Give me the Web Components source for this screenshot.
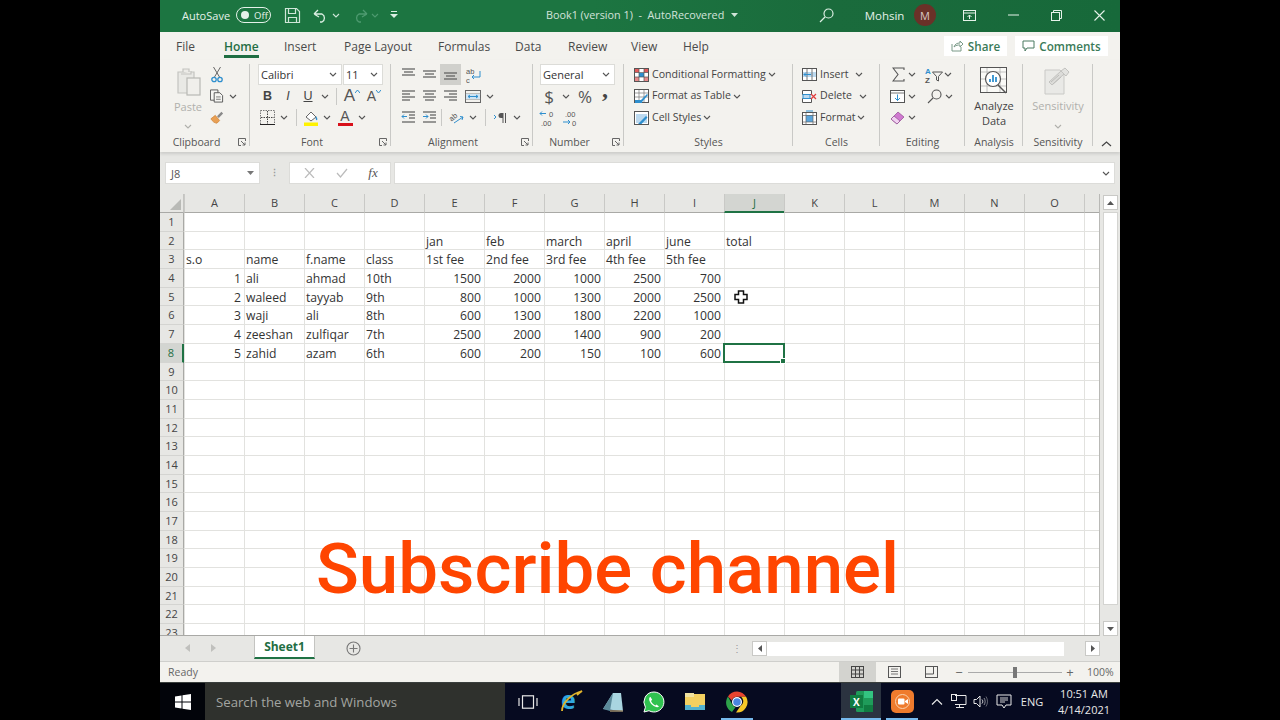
<!DOCTYPE html>
<html>
<head>
<meta charset="utf-8">
<title>Book1</title>
<style>
  html, body { margin: 0; padding: 0; background: #000; height: 720px; overflow: hidden; }
  body { font-family: "Open Sans", "Liberation Sans", sans-serif; }
</style>
</head>
<body>
<excel-window>
  <title-bar></title-bar>
  <ribbon-tabs></ribbon-tabs>
  <home-ribbon></home-ribbon>
  <formula-bar></formula-bar>
  <sheet-grid></sheet-grid>
  <sheet-tabs></sheet-tabs>
  <status-bar></status-bar>
  <task-bar></task-bar>
  <subscribe-banner>Subscribe channel</subscribe-banner>
</excel-window>

<script>
const G = "#5a5a5a", B = "#2f8fce";
const chev = (c = "#555") => `<svg width="8" height="5" viewBox="0 0 8 5"><path d="M1 1l3 3 3-3" fill="none" stroke="${c}" stroke-width="1.1"/></svg>`;
const lines = (rows) => rows.map(([x1, x2, y]) => `<path d="M${x1} ${y}H${x2}" stroke="${G}" stroke-width="1.2"/>`).join("");

// ribbon and window icons, all drawn by hand
const ICONS = {
  save: `<svg width="17" height="17" viewBox="0 0 17 17" fill="none" stroke="#cfe6d8" stroke-width="1.2"><path d="M1.5 1.5h11l3 3v11h-14z"/><path d="M4.5 1.5v5h7v-5M4.5 15.5v-5h8v5"/></svg>`,
  undo: `<svg width="16" height="16" viewBox="0 0 16 16" fill="none" stroke="#dcefe3" stroke-width="1.3"><path d="M1 7l4-4M1 7l5 3M1 7h8a4.5 4.5 0 0 1 0 8H7"/></svg>`,
  redo: `<svg width="16" height="16" viewBox="0 0 16 16" fill="none" stroke="#4e9a70" stroke-width="1.3"><path d="M15 7l-4-4M15 7l-5 3M15 7H7a4.5 4.5 0 0 0 0 8h2"/></svg>`,
  qat: `<svg width="8" height="8" viewBox="0 0 8 8" fill="#dcefe3"><rect x="1" y="0" width="6" height="1"/><path d="M0 3h8L4 7z"/></svg>`,
  search: `<svg width="15" height="15" viewBox="0 0 15 15" fill="none" stroke="#dcefe3" stroke-width="1.2"><circle cx="9.5" cy="5.5" r="4.5"/><path d="M6 9l-5 5"/></svg>`,
  display: `<svg width="13" height="11" viewBox="0 0 13 11" fill="none" stroke="#e6f2ea"><rect x=".5" y=".5" width="12" height="10"/><path d="M.5 3h12M6.5 9V5M4.5 7l2-2 2 2"/></svg>`,
  min: `<svg width="11" height="2" viewBox="0 0 11 2"><path d="M0 1h11" stroke="#e6f2ea"/></svg>`,
  restore: `<svg width="11" height="11" viewBox="0 0 11 11" fill="none" stroke="#e6f2ea"><rect x=".5" y="2.5" width="8" height="8"/><path d="M2.5 2.5v-2h8v8h-2"/></svg>`,
  close: `<svg width="11" height="11" viewBox="0 0 11 11" stroke="#e6f2ea" stroke-width="1.1"><path d="M.5.5l10 10M10.5.5l-10 10"/></svg>`,
  share: `<svg width="13" height="13" viewBox="0 0 13 13" fill="none" stroke="#7a9a88"><path d="M1 5v7h9V8M3 8c1-3 3-4 6-4V2l3 3-3 3V6c-2 0-4 0-6 2z"/></svg>`,
  comment: `<svg width="13" height="12" viewBox="0 0 13 12" fill="none" stroke="#4a7a60"><path d="M1 1h11v7H5l-2 3V8H1z"/></svg>`,
  paste: `<svg width="28" height="30" viewBox="0 0 28 30" fill="none" stroke="#c4c4c0" stroke-width="1.2"><path d="M4 5h16v21H4z" fill="#e9e9e5"/><path d="M9 5V2h6v3M7 7h10V4" fill="#ecebe7"/><rect x="13" y="11" width="13" height="17" fill="#f0efeb" stroke="#b8b8b4"/></svg>`,
  cut: `<svg width="12" height="16" viewBox="0 0 12 16" fill="none"><path d="M2.5 0l6 10M9.5 0l-6 10" stroke="#666"/><circle cx="3" cy="12.5" r="2.2" stroke="${B}" stroke-width="1.3"/><circle cx="9" cy="12.5" r="2.2" stroke="${B}" stroke-width="1.3"/></svg>`,
  copy: `<svg width="15" height="14" viewBox="0 0 15 14" fill="#f6f6f3" stroke="#555"><path d="M.5.5h8v11h-8z"/><path d="M4.5 3.5h6l3 3v7h-9z"/><path d="M6.5 8h5M6.5 10.5h5" stroke-width=".8"/></svg>`,
  brush: `<svg width="16" height="15" viewBox="0 0 16 15"><path d="M1 9l5-4 5 6-3 3c-3 0-5-2-7-5z" fill="#e9a054" stroke="#c97a2a" stroke-width=".7"/><path d="M8 6l5-5 2 2-5 5z" fill="#8a8a8a"/></svg>`,
  border: `<svg width="15" height="15" viewBox="0 0 15 15" fill="none" stroke="#777"><rect x=".5" y=".5" width="14" height="14" stroke-dasharray="1.5 1"/><path d="M7.5 1v13M1 7.5h13" stroke="#444" stroke-dasharray="1.5 1"/><path d="M0 14.5h15" stroke="#222"/></svg>`,
  fill: `<svg width="15" height="16" viewBox="0 0 15 16"><path d="M2 7l5-5 5 5-5 4z" fill="#fff" stroke="#666"/><path d="M12 6c1 2 2 3 1 4s-2-2-1-4z" fill="${B}"/><rect x="0" y="12.5" width="14" height="3.5" fill="#fff200"/></svg>`,
  alignT: `<svg width="15" height="13" viewBox="0 0 15 13" fill="none">${lines([[1,14,1],[3,12,4],[1,14,7]])}</svg>`,
  alignM: `<svg width="15" height="13" viewBox="0 0 15 13" fill="none">${lines([[1,14,3],[3,12,6],[1,14,9]])}</svg>`,
  alignB: `<svg width="15" height="13" viewBox="0 0 15 13" fill="none">${lines([[1,14,5],[3,12,8],[1,14,11]])}</svg>`,
  left: `<svg width="15" height="13" viewBox="0 0 15 13" fill="none">${lines([[1,14,1],[1,9,4],[1,14,7],[1,9,10]])}</svg>`,
  center: `<svg width="15" height="13" viewBox="0 0 15 13" fill="none">${lines([[1,14,1],[3,12,4],[1,14,7],[3,12,10]])}</svg>`,
  right: `<svg width="15" height="13" viewBox="0 0 15 13" fill="none">${lines([[1,14,1],[6,14,4],[1,14,7],[6,14,10]])}</svg>`,
  outdent: `<svg width="15" height="13" viewBox="0 0 15 13" fill="none">${lines([[1,14,1],[8,14,4],[8,14,7],[1,14,11]])}<path d="M6 5.5H1M3 3.5l-2 2 2 2" stroke="${B}"/></svg>`,
  indent: `<svg width="15" height="13" viewBox="0 0 15 13" fill="none">${lines([[1,14,1],[8,14,4],[8,14,7],[1,14,11]])}<path d="M1 5.5h5M4 3.5l2 2-2 2" stroke="${B}"/></svg>`,
  wrap: `<svg width="15" height="16" viewBox="0 0 15 16" style="overflow:visible"><text x="0" y="7" font-size="7.5" font-family="Liberation Sans" fill="#555">ab</text><text x="0" y="15.5" font-size="7.5" font-family="Liberation Sans" fill="#555">c</text><path d="M14 4v6H6M8 8l-2 2 2 2" fill="none" stroke="${B}"/></svg>`,
  merge: `<svg width="16" height="13" viewBox="0 0 16 13" fill="none"><rect x=".5" y=".5" width="15" height="12" stroke="#666"/><path d="M.5 4h15M.5 9h15" stroke="#888"/><rect x="1" y="4" width="14" height="5" fill="#cfe4f3"/><path d="M3 6.5h10M5 5L3 6.5 5 8M11 5l2 1.5L11 8" stroke="${B}"/></svg>`,
  orient: `<svg width="16" height="15" viewBox="0 0 16 15" fill="none" style="overflow:visible"><text x="0" y="9" font-size="7.5" font-family="Liberation Sans" fill="#555" transform="rotate(-40 5 7)">ab</text><path d="M5 13l9-6M11 6.500l3 .5-1 3" stroke="${B}"/></svg>`,
  para: `<svg width="13" height="11" viewBox="0 0 13 11" fill="none"><path d="M0 3l2 2-2 2" stroke="${B}"/><path d="M9 1v10M11.500 1v10" stroke="#555"/><path d="M9 1H7a2 2 0 0 0 0 5h2z" fill="#555"/></svg>`,
  incDec: `<svg width="17" height="16" viewBox="0 0 17 16" style="overflow:visible"><path d="M7 3.500H1M3 1.500l-2 2 2 2" fill="none" stroke="${B}"/><text x="10" y="7" font-size="7.500" font-family="Liberation Sans" fill="#555">0</text><text x="2" y="15.500" font-size="7.500" font-family="Liberation Sans" fill="#555">.00</text></svg>`,
  decDec: `<svg width="17" height="16" viewBox="0 0 17 16" style="overflow:visible"><text x="3" y="6.500" font-size="7.500" font-family="Liberation Sans" fill="#555">.00</text><path d="M1 12h7M6 10l2 2-2 2" fill="none" stroke="${B}"/><text x="10" y="15.500" font-size="7.500" font-family="Liberation Sans" fill="#555">0</text></svg>`,
  cond: `<svg width="15" height="14" viewBox="0 0 15 14"><rect x=".5" y=".5" width="14" height="13" fill="#fff" stroke="#555"/><rect x="1" y="1" width="4" height="3.500" fill="#e05a5a"/><rect x="5" y="5" width="5" height="4" fill="#2f8fce"/><rect x="10" y="1" width="4" height="3.500" fill="#e05a5a"/><rect x="1" y="9" width="4" height="4" fill="#e98a8a"/><rect x="10" y="9" width="4" height="4" fill="#e98a8a"/><path d="M5 1v12M10 1v12M1 4.500h13M1 9h13" stroke="#555" stroke-width=".7"/></svg>`,
  table: `<svg width="15" height="14" viewBox="0 0 15 14" fill="none"><rect x=".5" y=".5" width="14" height="13" fill="#fff" stroke="#555"/><path d="M1 4h13M5 1v12M10 1v12M1 8h13" stroke="#777" stroke-width=".7"/><path d="M5 13l8-8 1 1-6 7z" fill="${B}"/><rect x="1" y="11" width="7" height="3" fill="${B}"/></svg>`,
  cellst: `<svg width="15" height="14" viewBox="0 0 15 14" fill="none"><rect x=".5" y=".5" width="14" height="13" fill="#fff" stroke="#555"/><rect x="2" y="3" width="11" height="9" fill="#bcd9ef"/><path d="M4 13l8-8 1.500 1.500-6 6.500z" fill="${B}"/></svg>`,
  insert: `<svg width="15" height="13" viewBox="0 0 15 13" fill="none"><rect x=".5" y=".5" width="14" height="12" fill="#fff" stroke="#555"/><rect x="1" y="4" width="13" height="5" fill="#bcd9ef"/><path d="M5 1v11M10 1v11" stroke="#777"/><path d="M9 6.500H2M4 4.500l-2 2 2 2" stroke="${B}"/></svg>`,
  del: `<svg width="15" height="13" viewBox="0 0 15 13" fill="none"><path d="M.5.5h9v4h-9zM.5 8.500h9v4h-9z" fill="#fff" stroke="#555"/><rect x="1" y="4.500" width="7" height="4" fill="#bcd9ef" stroke="#2f8fce"/><path d="M9 4l5 5M14 4l-5 5" stroke="#e03c3c" stroke-width="1.200"/></svg>`,
  format: `<svg width="15" height="15" viewBox="0 0 15 15" fill="none"><rect x=".5" y="2.500" width="14" height="12" fill="#fff" stroke="#555"/><rect x="4" y="5" width="7" height="7" fill="#5aa5dc"/><path d="M4 3v11M11 3v11M1 5.500h13M1 12h13" stroke="#666" stroke-width=".7"/><path d="M4 1h7" stroke="${B}"/></svg>`,
  sum: `<svg width="13" height="15" viewBox="0 0 13 15" fill="none"><path d="M12 3V1H1l5 6.500L1 14h11v-2" stroke="#555" stroke-width="1.100"/></svg>`,
  sort: `<svg width="18" height="16" viewBox="0 0 18 16" style="overflow:visible"><text x="0" y="7" font-size="8" font-weight="700" font-family="Liberation Sans" fill="${B}">A</text><text x="0" y="16" font-size="8" font-weight="700" font-family="Liberation Sans" fill="#555">Z</text><path d="M7.500 5h10l-4 4.500V14l-2-1V9.500z" fill="none" stroke="#555"/></svg>`,
  filldown: `<svg width="15" height="13" viewBox="0 0 15 13" fill="none"><rect x=".5" y=".5" width="14" height="12" fill="#fff" stroke="#555"/><path d="M1 3h13" stroke="#777"/><path d="M7.500 4.500v6M5 8l2.500 2.500L10 8" stroke="${B}"/></svg>`,
  find: `<svg width="15" height="15" viewBox="0 0 15 15" fill="none" stroke="#555" stroke-width="1.100"><circle cx="9.500" cy="5.500" r="4.500"/><path d="M6 9l-5 5"/></svg>`,
  eraser: `<svg width="15" height="14" viewBox="0 0 15 14"><path d="M1 8l7-7 6 5-7 7z" fill="#d07ad0" stroke="#904a90" stroke-width=".7"/><path d="M1 8l3-3 6 5-3 3z" fill="#f1d3f1" stroke="#904a90" stroke-width=".7"/></svg>`,
  analyze: `<svg width="28" height="28" viewBox="0 0 28 28" fill="none"><rect x=".5" y=".5" width="26" height="25" stroke="#555" fill="#fafaf7"/><path d="M1 5h25M1 12h25M1 19h25M7 1v24M20 1v24" stroke="#aaa" stroke-width=".7"/><circle cx="13" cy="12" r="7.500" fill="#fff" stroke="#555" stroke-width="1.200"/><path d="M18 18l8 8" stroke="#555" stroke-width="1.500"/><path d="M10 15v-3M13 15V8M16 15v-5" stroke="${B}" stroke-width="1.800"/></svg>`,
  sensitivity: `<svg width="28" height="28" viewBox="0 0 28 28" fill="none"><path d="M1 3h15l4 4v20H1z" fill="#e9e9e6" stroke="#c9c9c6"/><path d="M5 15l12-11 3 3L8 18z" fill="#dcdcd9" stroke="#c2c2bf"/><path d="M17 4l4-3 4 4-3 4z" fill="#e3e3e0" stroke="#c2c2bf"/><path d="M7 15l8-7M9 17l8-7" stroke="#bdbdba"/></svg>`,
  launcher: `<svg width="8" height="8" viewBox="0 0 8 8" fill="none" stroke="#666"><path d="M7.500 3V.5H.5v7H3"/><path d="M3 3l4 4M7 4.500V7H4.500"/></svg>`,
  up: `<svg width="11" height="6" viewBox="0 0 11 6" fill="none"><path d="M1 5l4.500-4L10 5" stroke="#444" stroke-width="1.200"/></svg>`,
  normal: `<svg width="13" height="12" viewBox="0 0 13 12" fill="none" stroke="#444"><rect x=".5" y=".5" width="12" height="11"/><path d="M4.500 0v12M8.500 0v12M0 4h13M0 8h13"/></svg>`,
  layout: `<svg width="13" height="12" viewBox="0 0 13 12" fill="none" stroke="#555"><rect x=".5" y=".5" width="12" height="11"/><path d="M3 3h7M3 5.500h7M3 8h7" stroke-width=".8"/></svg>`,
  pbreak: `<svg width="13" height="12" viewBox="0 0 13 12" fill="none" stroke="#555"><rect x=".5" y=".5" width="12" height="11"/><path d="M8.500 0v8H0"/></svg>`,
};

// puts an icon (or any markup) into a fixed width slot in a ribbon row
const cell = (w, inner = "", extra = "") => `<span class="c" style="width:${w}px;${extra}">${inner}</span>`;
const i = (name, w) => cell(w, ICONS[name]);
const c = (w) => cell(w, chev());

class ExcelWindow extends HTMLElement {
  constructor() {
    super();
    this.attachShadow({ mode: "open" }).innerHTML = `
      <style>
        :host { display: flex; flex-direction: column; position: relative; width: 960px; height: 720px; margin: 0 auto; overflow: hidden; font-family: "Open Sans", "Liberation Sans", sans-serif; background: #f3f2ee; }
      </style>
      <slot></slot>`;
  }
}

class TitleBar extends HTMLElement {
  constructor() {
    super();
    this.attachShadow({ mode: "open" }).innerHTML = `
      <style>
        :host { display: flex; align-items: center; height: 32px; flex: none; color: #e4f1e9; font-size: 11px; background: linear-gradient(90deg, #1c7541 0%, #1c7541 45%, #1a6b3c 70%, #17693a 100%); }
        .c { display: flex; justify-content: center; align-items: center; flex: none; height: 32px; margin-top: -2px; }
        .toggle { box-sizing: border-box; width: 35px; height: 16px; border: 1px solid #e4f1e9; border-radius: 8px; display: flex; align-items: center; gap: 5px; padding-left: 4px; font-size: 9.5px; margin-right: 10px; margin-top: -2px; flex: none; }
        .toggle b { width: 8px; height: 8px; background: #e4f1e9; border-radius: 50%; flex: none; }
        .title { flex: none; display: flex; align-items: center; font-size: 10.800px; opacity: .9; white-space: nowrap; margin-left: 143px; margin-top: -3px; width: 268px; }
        .title svg { margin-left: 7px; }
        .avatar { width: 22px; height: 22px; border-radius: 50%; background: #6a3128; color: #d8c7c2; display: flex; align-items: center; justify-content: center; font-size: 11px; flex: none; margin-top: -2px; }
      </style>
      ${cell(54, "AutoSave", "justify-content:flex-start;padding-left:22px;font-size:11px")}
      <span class="toggle"><b></b>Off</span>
      ${i("save", 22)}${cell(8)}${i("undo", 20)}${cell(10, chev("#cfe6d8"))}${cell(9)}${i("redo", 20)}${cell(10, chev("#4e9a70"))}${cell(5)}${i("qat", 18)}
      <span class="title">Book1 (version 1)&nbsp; -&nbsp; AutoRecovered <svg width="7" height="4" viewBox="0 0 7 4" fill="#e4f1e9"><path d="M0 0h7L3.500 4z"/></svg></span>
      ${i("search", 24)}${cell(28)}
      ${cell(37, "Mohsin", "font-size:11.5px")}${cell(11)}<span class="avatar">M</span>
      ${cell(21)}${i("display", 24)}${cell(20)}${i("min", 24)}${cell(19)}${i("restore", 24)}${cell(19)}${i("close", 24)}`;
  }
}

class RibbonTabs extends HTMLElement {
  constructor() {
    super();
    const tabs = [["File", 48], ["Home", 60], ["Insert", 60], ["Page Layout", 94], ["Formulas", 77], ["Data", 53], ["Review", 63], ["View", 52], ["Help", 261]];
    this.attachShadow({ mode: "open" }).innerHTML = `
      <style>
        :host { display: flex; align-items: stretch; height: 28px; flex: none; padding-left: 16px; font-size: 12px; color: #4a4a4a; background: #f3f2ee; }
        .t { flex: none; line-height: 29px; white-space: nowrap; }
        .on { color: #1f6e43; font-weight: 600; }
        .on span { display: inline-block; height: 26px; box-sizing: border-box; border-bottom: 3px solid #1f6e43; }
        .btn { flex: none; align-self: center; height: 20px; margin-top: -1px; background: #fff; color: #3a7a58; font-weight: 600; font-size: 11.700px; display: flex; align-items: center; justify-content: center; gap: 4px; box-sizing: border-box; }
      </style>
      ${tabs.map(([t, w]) => `<div class="t ${t === "Home" ? "on" : ""}" style="width:${w}px"><span>${t}</span></div>`).join("")}
      <div class="btn" style="width:63px">${ICONS.share}Share</div>
      <div style="width:8px"></div>
      <div class="btn" style="width:93px">${ICONS.comment}Comments</div>`;
  }
}

class RibbonGroup extends HTMLElement {
  constructor() {
    super();
    const launch = this.hasAttribute("launcher") ? `<span class="launch">${ICONS.launcher}</span>` : "";
    this.attachShadow({ mode: "open" }).innerHTML = `
      <style>
        :host { display: flex; flex-direction: column; flex: none; box-sizing: border-box; height: 92px; position: relative; }
        .body { height: 70px; padding-top: 4px; box-sizing: border-box; flex: none; }
        .label { height: 20px; display: flex; align-items: center; justify-content: center; font-size: 10.5px; color: #555; margin-top: 2px; padding-right: var(--label-shift, 0); white-space: nowrap; }
        .sep { position: absolute; right: 0; top: 4px; bottom: 6px; width: 1px; background: #c9c9c6; }
        .launch { position: absolute; right: 4px; bottom: 6px; display: flex; }
      </style>
      <div class="body"><slot></slot></div>
      <div class="label">${this.getAttribute("label")}</div>
      ${launch}
      <span class="sep"></span>`;
  }
}

class HomeRibbon extends HTMLElement {
  constructor() {
    super();
    this.attachShadow({ mode: "open" }).innerHTML = `
      <style>
        :host { display: flex; height: 92px; flex: none; background: #f3f2ee; color: #444; font-size: 11px; box-shadow: 0 2px 3px rgba(0,0,0,.12); position: relative; z-index: 1; }
        .r { display: flex; align-items: center; height: 21.500px; }
        .c { display: flex; align-items: center; justify-content: center; flex: none; height: 21px; }
        .split { display: flex; }
        .col { display: flex; flex-direction: column; align-items: center; }
        .select { box-sizing: border-box; height: 21px; background: #fff; border: 1px solid #dcdcd8; display: flex; align-items: center; justify-content: space-between; padding: 0 4px 0 2px; font-size: 11px; flex: none; color: #333; }
        .vsep { width: 1px; height: 17px; background: #c9c9c6; flex: none; }
        .big { font-size: 11px; line-height: 15px; text-align: center; }
        .muted { color: #b0b0ac; }
        .lab { font-size: 10.600px; color: #444; white-space: nowrap; margin-top: -2px; }
        b, u, em { font-family: "Liberation Sans", sans-serif; font-size: 12.500px; color: #444; }
        .A { font-family: "Liberation Sans", sans-serif; font-size: 15px; color: #555; }
      </style>

      <rb-group label="Clipboard" launcher style="width:90px;--label-shift:17px">
        <div class="split">
          <div class="col" style="width:36px;margin-left:10px;margin-right:4px;padding-top:3px;flex:none">
            ${ICONS.paste}
            <span class="big muted" style="margin-top:2px">Paste</span>
            <span style="margin-top:3px">${chev("#b0b0ac")}</span>
          </div>
          <div>
            <div class="r">${i("cut", 14)}</div>
            <div class="r">${i("copy", 14)}${cell(5)}${c(8)}</div>
            <div class="r">${i("brush", 14)}</div>
          </div>
        </div>
      </rb-group>

      <rb-group label="Font" launcher style="width:141px;--label-shift:17px">
        <div class="r" style="padding-left:8px;gap:1px">
          <span class="select" style="width:84px">Calibri ${chev()}</span>
          <span class="select" style="width:40px">11 ${chev()}</span>
        </div>
        <div class="r" style="padding-left:7px">
          ${cell(21, "<b>B</b>")}${cell(20, "<em>I</em>")}${cell(20, "<u>U</u>")}${c(14)}${cell(9, '<span class="vsep"></span>')}
          ${cell(22, '<span class="A" style="font-size:17px">A</span><svg width="5" height="4" viewBox="0 0 5 4" style="margin-bottom:9px"><path d="M0 3l2.500-3L5 3" fill="none" stroke="#2f8fce"/></svg>')}
          ${cell(22, '<span class="A" style="font-size:14px">A</span><svg width="5" height="4" viewBox="0 0 5 4" style="margin-bottom:9px"><path d="M0 0l2.500 3L5 0" fill="none" stroke="#2f8fce"/></svg>')}
        </div>
        <div class="r" style="padding-left:7px">
          ${i("border", 20)}${c(14)}${cell(3)}${cell(4, '<span class="vsep"></span>')}${cell(3)}${i("fill", 20)}${c(12)}${cell(1)}
          ${cell(22, '<span style="display:flex;flex-direction:column;align-items:center"><span class="A" style="line-height:13px;font-size:14px">A</span><span style="width:15px;height:3px;background:#d8101a"></span></span>')}${c(12)}
        </div>
      </rb-group>

      <rb-group label="Alignment" launcher style="width:142px;--label-shift:18px">
        <div class="r" style="padding-left:7px">${i("alignT", 21)}${i("alignM", 21)}${cell(21, ICONS.alignB, "background:#d0d0cc")}${i("wrap", 24)}</div>
        <div class="r" style="padding-left:7px">${i("left", 21)}${i("center", 21)}${i("right", 21)}${i("merge", 24)}${c(10)}</div>
        <div class="r" style="padding-left:7px">${i("outdent", 21)}${i("indent", 21)}${cell(3, '<span class="vsep"></span>')}${cell(2)}${i("orient", 24)}${c(8)}${cell(8)}${cell(1, '<span class="vsep"></span>')}${cell(4)}${i("para", 21)}${c(12)}</div>
      </rb-group>

      <rb-group label="Number" launcher style="width:91px;--label-shift:18px">
        <div class="r" style="padding-left:7px"><span class="select" style="width:75px">General ${chev()}</span></div>
        <div class="r" style="padding-left:6px">${cell(20, '<span style="font-size:17px;color:#555">$</span>')}${c(14)}${cell(24, '<span style="font-size:17px;color:#555">%</span>')}${cell(16, '<span style="font-size:24px;font-weight:700;color:#444;line-height:14px;margin-bottom:14px;font-family:Liberation Serif,serif">,</span>')}</div>
        <div class="r" style="padding-left:3px">${i("incDec", 23)}${i("decDec", 23)}</div>
      </rb-group>

      <rb-group label="Styles" style="width:169px">
        <div class="r" style="padding-left:9px">${i("cond", 17)}${cell(2)}<span class="lab">Conditional Formatting</span>${cell(12, chev())}</div>
        <div class="r" style="padding-left:9px">${i("table", 17)}${cell(2)}<span class="lab">Format as Table</span>${cell(12, chev())}</div>
        <div class="r" style="padding-left:9px">${i("cellst", 17)}${cell(2)}<span class="lab">Cell Styles</span>${cell(12, chev())}</div>
      </rb-group>

      <rb-group label="Cells" style="width:87px">
        <div class="r" style="padding-left:8px">${i("insert", 17)}${cell(2)}<span class="lab" style="width:34px">Insert</span>${c(10)}</div>
        <div class="r" style="padding-left:8px">${i("del", 17)}${cell(2)}<span class="lab" style="width:38px">Delete</span>${c(10)}</div>
        <div class="r" style="padding-left:8px">${i("format", 17)}${cell(2)}<span class="lab">Format</span>${cell(11, chev())}</div>
      </rb-group>

      <rb-group label="Editing" style="width:85px">
        <div class="r" style="padding-left:10px">${i("sum", 16)}${c(12)}${cell(6)}${i("sort", 19)}${c(9)}</div>
        <div class="r" style="padding-left:9px">${i("filldown", 17)}${c(11)}${cell(7)}${i("find", 20)}${c(9)}</div>
        <div class="r" style="padding-left:9px">${i("eraser", 17)}${c(11)}</div>
      </rb-group>

      <rb-group label="Analysis" style="width:58px">
        <div class="col" style="padding-top:3px">
          ${ICONS.analyze}
          <span class="big" style="margin-top:3px">Analyze<br>Data</span>
        </div>
      </rb-group>

      <rb-group label="Sensitivity" style="width:70px">
        <div class="col" style="padding-top:3px">
          ${ICONS.sensitivity}
          <span class="big muted" style="margin-top:3px">Sensitivity</span>
          <span style="margin-top:4px">${chev("#b0b0ac")}</span>
        </div>
      </rb-group>

      <div style="flex:1;display:flex;justify-content:center;align-items:flex-end;padding-bottom:5px">${ICONS.up}</div>`;
  }
}

class FormulaBar extends HTMLElement {
  constructor() {
    super();
    this.attachShadow({ mode: "open" }).innerHTML = `
      <style>
        :host { display: flex; align-items: center; height: 42px; flex: none; background: #e7e7e4; padding: 0 5px; box-sizing: border-box; font-size: 11px; color: #555; }
        .box { height: 22px; background: #fff; border: 1px solid #dcdcd9; box-sizing: border-box; display: flex; align-items: center; flex: none; }
        .name { width: 95px; justify-content: space-between; padding: 0 5px; }
        .dots { width: 29px; display: flex; justify-content: center; color: #999; font-weight: 700; font-size: 9px; line-height: 4px; }
        .fx { width: 102px; justify-content: space-around; padding: 0 2px 0 4px; color: #bbb; }
        .fx i { font-family: "Liberation Serif", serif; color: #555; font-size: 13px; }
        .input { width: 721px; margin-left: 3px; justify-content: flex-end; padding-right: 4px; }
      </style>
      <div class="box name">J8 <svg width="7" height="4" viewBox="0 0 7 4" fill="#777"><path d="M0 0h7L3.500 4z"/></svg></div>
      <div class="dots">⋮</div>
      <div class="box fx">
        <svg width="11" height="10" viewBox="0 0 11 10" stroke="#bbb" stroke-width="1.200"><path d="M1 0l9 10M10 0L1 10"/></svg>
        <svg width="12" height="10" viewBox="0 0 12 10" fill="none" stroke="#bbb" stroke-width="1.200"><path d="M1 5l3.500 4L11 1"/></svg>
        <i>fx</i>
      </div>
      <div class="box input">${chev("#555")}</div>`;
  }
}

class SheetGrid extends HTMLElement {
  constructor() {
    super();
    const cols = "ABCDEFGHIJKLMNO".split("");
    // row number -> cell values for columns A..J
    const data = {
      2: ["", "", "", "", "jan", "feb", "march", "april", "june", "total"],
      3: ["s.o", "name", "f.name", "class", "1st fee", "2nd fee", "3rd fee", "4th fee", "5th fee"],
      4: [1, "ali", "ahmad", "10th", 1500, 2000, 1000, 2500, 700],
      5: [2, "waleed", "tayyab", "9th", 800, 1000, 1300, 2000, 2500],
      6: [3, "waji", "ali", "8th", 600, 1300, 1800, 2200, 1000],
      7: [4, "zeeshan", "zulfiqar", "7th", 2500, 2000, 1400, 900, 200],
      8: [5, "zahid", "azam", "6th", 600, 200, 150, 100, 600],
    };
    let html = `<div class="corner"><svg width="11" height="11" viewBox="0 0 11 11"><path d="M11 0v11H0z" fill="#b9bab6"/></svg></div>`;
    html += cols.map((l) => `<div class="ch ${l === "J" ? "sel" : ""}">${l}</div>`).join("");
    html += `<div class="ch end"></div>`;
    for (let r = 1; r <= 23; r++) {
      html += `<div class="rh ${r === 8 ? "sel" : ""}">${r}</div>`;
      for (let k = 0; k < 15; k++) {
        const v = (data[r] || [])[k];
        const cls = typeof v === "number" ? "d num" : "d";
        html += `<div class="${cls}">${v === undefined ? "" : v}</div>`;
      }
      html += `<div class="d"></div>`;
    }
    this.attachShadow({ mode: "open" }).innerHTML = `
      <style>
        :host { display: flex; flex: none; height: 442px; background: #e7e7e4; position: relative; overflow: hidden; }
        .g { display: grid; width: 940px; flex: none; grid-template-columns: 24px repeat(15, 60px) 16px; grid-template-rows: 19px repeat(23, 18.700px); height: 442px; overflow: hidden; background: #fff; font-size: 12.200px; color: #333; border-bottom: 1px solid #a9a9a6; border-right: 1px solid #b9b9b6; box-sizing: border-box; }
        .corner { background: #e7e7e4; border-right: 1px solid #c4c4c1; border-bottom: 1px solid #a9a9a6; display: flex; justify-content: flex-end; align-items: flex-end; padding: 0 2px 2px 0; box-sizing: border-box; }
        .ch { background: #e7e7e4; border-left: 1px solid #c9c9c6; border-bottom: 1px solid #a9a9a6; box-sizing: border-box; text-align: center; line-height: 17px; font-size: 11px; color: #444; }
        .ch.sel { background: #d3d5d1; border-bottom: 2px solid #1f7244; color: #1f6e43; }
        .rh { background: #e7e7e4; border-right: 1px solid #a9a9a6; border-bottom: 1px solid #d4d4d1; box-sizing: border-box; text-align: center; font-size: 11px; line-height: 18px; color: #444; }
        .rh.sel { background: #d3d5d1; border-right: 2px solid #1f7244; color: #1f6e43; }
        .d { border-left: 1px solid #e2e2df; border-bottom: 1px solid #e2e2df; box-sizing: border-box; padding: 0 2px 0 1px; line-height: 20px; white-space: nowrap; overflow: visible; }
        .num { text-align: right; padding-right: 3px; }
        .scroll { flex: 1; display: flex; flex-direction: column; align-items: center; padding-top: 1px; box-sizing: border-box; }
        .sb { width: 15px; height: 15px; flex: none; background: #fff; border: 1px solid #c9c9c6; box-sizing: border-box; display: flex; align-items: center; justify-content: center; }
        .thumb { width: 15px; height: 393px; margin-top: 2px; background: #fff; flex: none; border: 1px solid #d4d4d1; box-sizing: border-box; }
        .track { flex: 1; }
        .pick { position: absolute; left: 563px; top: 149px; width: 62px; height: 20px; border: 2px solid #1f7244; box-sizing: border-box; pointer-events: none; }
        .pick::after { content: ""; position: absolute; right: -3px; bottom: -3px; width: 4px; height: 4px; background: #1f7244; border: 1px solid #fff; }
        .cursor { position: absolute; left: 574px; top: 96px; }
      </style>
      <div class="g">${html}</div>
      <div class="scroll">
        <div class="sb"><svg width="7" height="4" viewBox="0 0 7 4" fill="#555"><path d="M0 4h7L3.500 0z"/></svg></div>
        <div class="thumb"></div>
        <div class="track"></div>
        <div class="sb"><svg width="7" height="4" viewBox="0 0 7 4" fill="#555"><path d="M0 0h7L3.500 4z"/></svg></div>
      </div>
      <div class="pick"></div>
      <svg class="cursor" width="14" height="14" viewBox="0 0 14 14"><path d="M4.500 1h5v3.500H13v5H9.500V13h-5V9.500H1v-5h3.500z" fill="#fff" stroke="#111" stroke-width="1.500"/></svg>`;
  }
}

class SheetTabs extends HTMLElement {
  constructor() {
    super();
    this.attachShadow({ mode: "open" }).innerHTML = `
      <style>
        :host { display: flex; align-items: flex-start; height: 26px; flex: none; background: #e7e7e4; border-bottom: 1px solid #cfcfcc; box-sizing: border-box; }
        .nav { width: 94px; height: 24px; display: flex; align-items: center; justify-content: flex-end; gap: 21px; padding-right: 38px; box-sizing: border-box; flex: none; }
        .tab { width: 61px; height: 24px; background: #fff; color: #1f6e43; font-weight: 700; font-size: 12px; display: flex; align-items: center; justify-content: center; box-sizing: border-box; border-bottom: 2px solid #1f7244; margin-top: -1px; border-left: 1px solid #c4c4c1; border-right: 1px solid #c4c4c1; flex: none; }
        .add { width: 56px; height: 24px; display: flex; align-items: center; justify-content: center; flex: none; margin-left: 10px; }
        .dots { margin-left: 351px; width: 10px; color: #999; font-size: 10px; flex: none; line-height: 24px; text-align: center; }
        .hs { display: flex; align-items: center; margin-left: 10px; margin-top: 5px; }
        .b { width: 15px; height: 15px; background: #fff; border: 1px solid #c9c9c6; box-sizing: border-box; display: flex; align-items: center; justify-content: center; flex: none; }
        .thumb { width: 297px; height: 14px; background: #fff; flex: none; }
        .track { width: 21px; flex: none; }
      </style>
      <div class="nav">
        <svg width="5" height="8" viewBox="0 0 5 8" fill="#c0c0bd"><path d="M5 0v8L0 4z"/></svg>
        <svg width="5" height="8" viewBox="0 0 5 8" fill="#c0c0bd"><path d="M0 0v8l5-4z"/></svg>
      </div>
      <div class="tab">Sheet1</div>
      <div class="add"><svg width="15" height="15" viewBox="0 0 15 15" fill="none" stroke="#777" stroke-width="1.100"><circle cx="7.500" cy="7.500" r="6.500"/><path d="M7.500 3.500v8M3.500 7.500h8"/></svg></div>
      <div class="dots">⋮</div>
      <div class="hs">
        <div class="b"><svg width="4" height="7" viewBox="0 0 4 7" fill="#555"><path d="M4 0v7L0 3.500z"/></svg></div>
        <div class="thumb"></div>
        <div class="track"></div>
        <div class="b"><svg width="4" height="7" viewBox="0 0 4 7" fill="#555"><path d="M0 0v7l4-3.500z"/></svg></div>
      </div>`;
  }
}

class StatusBar extends HTMLElement {
  constructor() {
    super();
    this.attachShadow({ mode: "open" }).innerHTML = `
      <style>
        :host { display: flex; align-items: center; height: 20px; flex: none; background: #f3f2ee; font-size: 10.500px; color: #666; box-sizing: border-box; }
        .ready { width: 679px; padding-left: 8px; box-sizing: border-box; flex: none; }
        .v { width: 37px; height: 20px; display: flex; align-items: center; justify-content: center; flex: none; }
        .on { background: #d3d3cf; }
        .slider { width: 94px; height: 1px; background: #aaa; position: relative; flex: none; margin-left: 1px; }
        .slider b { position: absolute; left: 45px; top: -5px; width: 4px; height: 11px; background: #777; }
        .zm { flex: none; color: #666; font-size: 13px; width: 16px; text-align: center; }
      </style>
      <div class="ready">Ready</div>
      <div class="v on">${ICONS.normal}</div>
      <div class="v">${ICONS.layout}</div>
      <div class="v">${ICONS.pbreak}</div>
      <div class="zm" style="margin-left:1px">−</div>
      <div class="slider"><b></b></div>
      <div class="zm">+</div>
      <div style="margin-left:9px;font-size:10.500px">100%</div>`;
  }
}

class TaskBar extends HTMLElement {
  constructor() {
    super();
    this.attachShadow({ mode: "open" }).innerHTML = `
      <style>
        :host { display: flex; align-items: center; height: 38px; flex: none; background: #060a20; color: #dfe3e8; font-size: 11px; border-top: 1px solid #3a3f3d; box-sizing: border-box; }
        .start { width: 45px; height: 37px; background: #02040a; display: flex; align-items: center; justify-content: center; flex: none; }
        .search { width: 300px; height: 37px; background: #2f312d; color: #a3a5a1; font-size: 13.200px; display: flex; align-items: center; padding-left: 11px; box-sizing: border-box; flex: none; }
        .app { flex: none; height: 37px; display: flex; align-items: center; justify-content: center; position: relative; }
        .run::after { content: ""; position: absolute; left: 0; right: 0; bottom: 0; height: 2px; background: #76b9ed; }
        .act { background: #2b3340; }
        .clock { flex: none; width: 70px; text-align: center; font-size: 11px; line-height: 16px; color: #e8e8e8; white-space: nowrap; }
      </style>
      <div class="start"><svg width="16" height="16" viewBox="0 0 16 16" fill="#fff"><path d="M0 2.500l6.500-1v6H0zM7.500 1.300L16 0v7.500H7.500zM0 8.500h6.500v6l-6.500-1zM7.500 8.500H16V16l-8.500-1.300z"/></svg></div>
      <div class="search">Search the web and Windows</div>
      <div class="app" style="width:46px"><svg width="20" height="14" viewBox="0 0 20 14" fill="none" stroke="#e8e8e8" stroke-width="1.200"><rect x="4.500" y=".8" width="11" height="12.400"/><path d="M1 3v8M19 3v8"/></svg></div>
      <div class="app" style="width:41px"><svg width="23" height="23" viewBox="0 0 23 23" style="overflow:visible"><text x="1" y="19" font-size="25" font-weight="700" font-family="Open Sans" fill="#31a8e0">e</text><path d="M2 21C2 13 11 4 22 1c-3 2-4 3-5 4" fill="none" stroke="#e3b52c" stroke-width="1.800"/></svg></div>
      <div class="app" style="width:41px"><svg width="22" height="22" viewBox="0 0 22 22"><path d="M1 18L11 2h8l2 18z" fill="#a9d5e0"/><path d="M1 18l10-16-3 18z" fill="#5b8a9a"/><path d="M8 20l13 0" stroke="#9a8a6a" stroke-width="1.500"/></svg></div>
      <div class="app" style="width:41px"><svg width="22" height="22" viewBox="0 0 22 22"><path d="M11 1a10 10 0 1 1-5 18.700L1 21l1.400-4.800A10 10 0 0 1 11 1z" fill="#2fc24f" stroke="#fff" stroke-width="1"/><path d="M7 6c-2 2 0 6 2.500 8s5 3 6.500 1.500l-2.500-2-1.200 1C11 14 8.500 11.500 8 10l1.200-1.200L7.500 6z" fill="#fff"/></svg></div>
      <div class="app" style="width:42px"><svg width="20" height="18" viewBox="0 0 20 18"><rect x="0" y="1" width="20" height="16" fill="#f3d060"/><rect x="0" y="0" width="9" height="4" fill="#f0e2a0"/><rect x="0" y="12" width="20" height="5" fill="#53b2cf"/><rect x="6" y="10" width="8" height="4" fill="#f3d060"/></svg></div>
      <div class="app run" style="width:32px;margin-left:5px"><svg width="22" height="22" viewBox="0 0 22 22"><path d="M2 5.500A10.500 10.500 0 0 1 20.100 5.800H11A5.500 5.500 0 0 0 5.800 9.500z" fill="#e8432f"/><path d="M2 5.500L6 13a5.500 5.500 0 0 0 3.500 3.200L6 21A10.500 10.500 0 0 1 2 5.500z" fill="#2ea24a"/><path d="M20.100 5.800A10.500 10.500 0 0 1 10 21.500l4.500-6.500a5.500 5.500 0 0 0 .5-9.200z" fill="#f6c827"/><circle cx="11" cy="11" r="5" fill="#fff"/><circle cx="11" cy="11" r="3.800" fill="#4a86e0"/></svg></div>
      <div style="width:88px;flex:none"></div>
      <div class="app run act" style="width:40px"><svg width="23" height="21" viewBox="0 0 23 21" style="overflow:visible"><rect x="6" y="0" width="17" height="21" rx="1.500" fill="#1f9c5a"/><rect x="14" y="0" width="9" height="7" fill="#33c481"/><rect x="14" y="14" width="9" height="7" fill="#107c41"/><rect x="0" y="4" width="13" height="13" fill="#107c41"/><text x="3" y="14.500" font-size="10" font-weight="700" font-family="Open Sans" fill="#fff">X</text></svg></div>
      <div style="width:5px;flex:none"></div>
      <div class="app run" style="width:32px"><svg width="23" height="23" viewBox="0 0 23 23"><rect width="23" height="23" rx="5" fill="#ef7b2d"/><circle cx="11.500" cy="11.500" r="7" fill="none" stroke="#fbd2ae"/><rect x="7" y="8.500" width="6.500" height="6" rx="1" fill="#fff"/><path d="M14 11l3-2v5l-3-2z" fill="#fff"/></svg></div>
      <div style="width:9px;flex:none"></div>
      <div class="app" style="width:19px"><svg width="12" height="7" viewBox="0 0 12 7" fill="none" stroke="#e8e8e8" stroke-width="1.200"><path d="M1 6.500l5-5 5 5"/></svg></div>
      <div class="app" style="width:25px"><svg width="16" height="15" viewBox="0 0 16 15" fill="none" stroke="#e8e8e8"><path d="M4 1.500h11v9H4M8.500 10.500v3M5 13.500h8"/><rect x=".5" y=".5" width="5" height="6"/></svg></div>
      <div class="app" style="width:19px"><svg width="16" height="13" viewBox="0 0 16 13" fill="none" stroke="#e8e8e8"><path d="M1 4.500h2.500L7 1v11L3.500 8.500H1z"/><path d="M9 4.500c1 1 1 3 0 4"/><path d="M11 3c1.500 2 1.500 5 0 7" opacity=".6"/><path d="M13 1.500c2 3 2 7 0 10" opacity=".4"/></svg></div>
      <div class="app" style="width:28px"><svg width="16" height="16" viewBox="0 0 16 16" fill="none" stroke="#e8e8e8"><path d="M1 1h14v10H10l-2 3-2-3H1z"/><path d="M4 4h8M4 6h8M4 8h5" stroke-width=".9"/></svg></div>
      <div class="app" style="width:28px;font-size:11px;color:#e8e8e8">ENG</div>
      <div style="width:3px;flex:none"></div>
      <div class="clock">10:51 AM<br>4/14/2021</div>`;
  }
}

class SubscribeBanner extends HTMLElement {
  constructor() {
    super();
    this.attachShadow({ mode: "open" }).innerHTML = `
      <style>
        :host { display: block; position: absolute; left: 156px; top: 527px; color: #ff4500; font-family: Roboto, "Liberation Sans", Arial, sans-serif; font-weight: 500; font-size: 70.800px; line-height: 84px; white-space: nowrap; }
      </style>
      <slot></slot>`;
  }
}

customElements.define("excel-window", ExcelWindow);
customElements.define("title-bar", TitleBar);
customElements.define("ribbon-tabs", RibbonTabs);
customElements.define("rb-group", RibbonGroup);
customElements.define("home-ribbon", HomeRibbon);
customElements.define("formula-bar", FormulaBar);
customElements.define("sheet-grid", SheetGrid);
customElements.define("sheet-tabs", SheetTabs);
customElements.define("status-bar", StatusBar);
customElements.define("task-bar", TaskBar);
customElements.define("subscribe-banner", SubscribeBanner);
</script>
</body>
</html>
